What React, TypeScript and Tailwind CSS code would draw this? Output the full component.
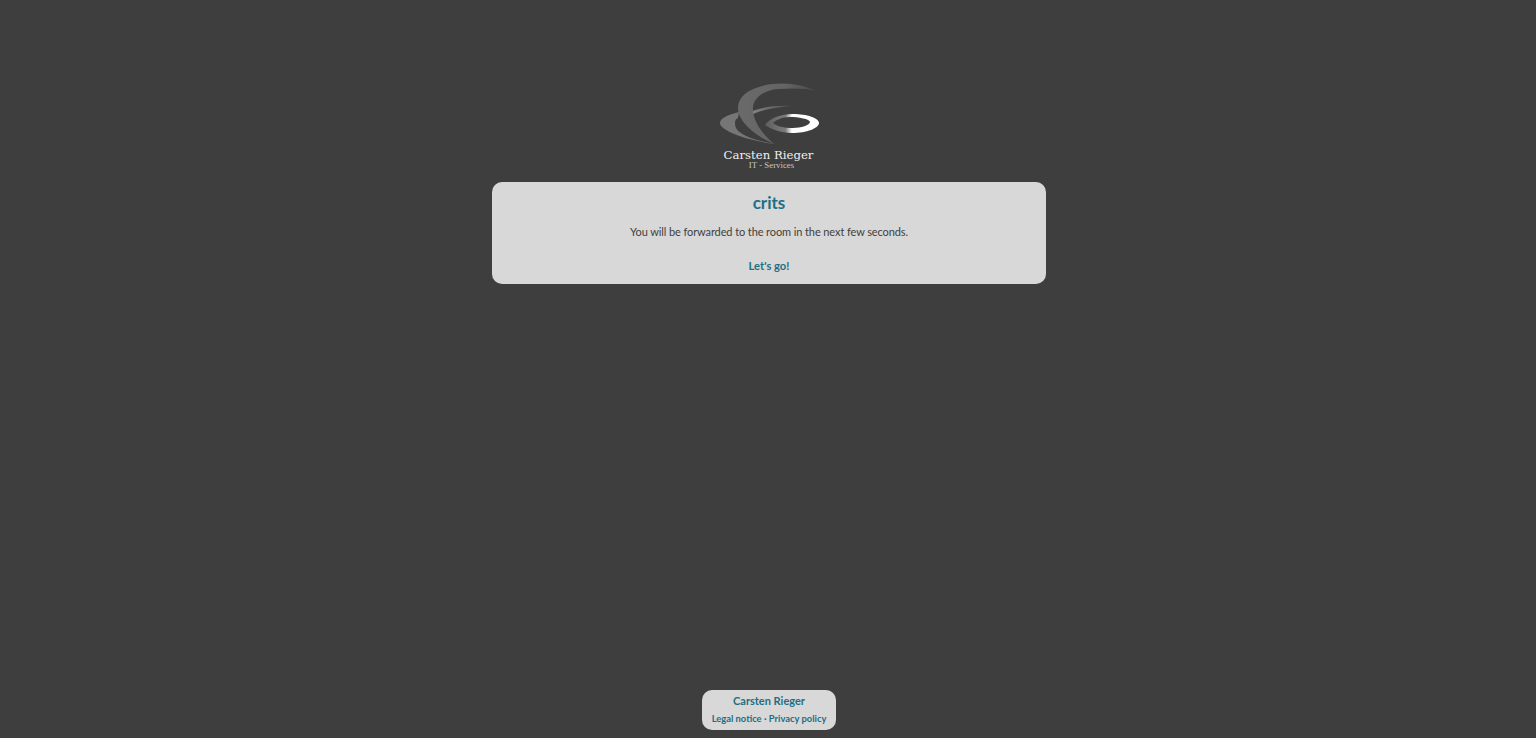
const sans = "font-['Lato',sans-serif]";

function Logo() {
  return (
    <svg width="140" height="110" viewBox="-1 0 140 110" className="block">
      <defs>
        <linearGradient id="top" x1="0" y1="0" x2="1" y2="0">
          <stop offset="0" stopColor="#6a6a6a" />
          <stop offset="0.6" stopColor="#646464" />
          <stop offset="1" stopColor="#484848" />
        </linearGradient>
        <linearGradient id="bar" x1="0" y1="0" x2="1" y2="0">
          <stop offset="0" stopColor="#828282" />
          <stop offset="1" stopColor="#4c4c4c" />
        </linearGradient>
        <linearGradient id="eye" x1="0" y1="0" x2="1" y2="0">
          <stop offset="0" stopColor="#5e5e5e" />
          <stop offset="0.38" stopColor="#7c7c7c" />
          <stop offset="0.5" stopColor="#ffffff" />
          <stop offset="1" stopColor="#ffffff" />
        </linearGradient>
      </defs>
      {/* upper swoosh */}
      <path d="M117 21C104 15 88 12 72 14C50 17 38 26 38 38C38 52 56 66 74 74C62 64 52 50 53 37C54 28 64 20 78 19C92 18 106 18 117 21Z" fill="url(#top)" />
      {/* thin bar */}
      <path d="M53 41C62 37 78 35 92 36C78 37 64 39 53 44Z" fill="url(#bar)" />
      {/* left swoosh */}
      <path d="M39 42C26 45 20 49 20 53C20 60 44 70 75 74C58 71 40 66 36 58C34 53 35 49 38 48Z" fill="#767676" />
      {/* eye */}
      <path fillRule="evenodd" d="M65 55C69 49 79 44 93 44C107 44 119 48 119 53C119 58 107 63 92 63C80 63 71 59 65 55ZM73 53C76 56 84 58 93 58C101 58 110 55 110 52C110 49 98 47 90 47C82 47 76 50 73 53Z" fill="url(#eye)" />
      <text x="68.5" y="88.5" textAnchor="middle" fontFamily="'DejaVu Serif',serif" fontSize="11.7" fill="#f0f0f0">Carsten Rieger</text>
      <text x="71.5" y="98" textAnchor="middle" fontFamily="'Liberation Serif',serif" fontSize="8.8" fill="#c8c8c8">IT - Services</text>
    </svg>
  );
}

export default function App() {
  return (
    <div className={`${sans} flex h-[738px] flex-col items-center overflow-hidden bg-[#3e3e3e] pl-[2px]`}>
      <div className="mt-[70px] mb-[2px]">
        <Logo />
      </div>
      <main className="flex h-[102px] w-[554px] flex-col items-center rounded-[10px] bg-[#d8d8d8] pt-[9px]">
        <h1 className="text-[17px] leading-[23px] font-bold text-[#1f6e85]">crits</h1>
        <p className="mt-[10px] text-[11px] leading-[16px] tracking-[-0.1px] text-[#404040]">
          You will be forwarded to the room in the next few seconds.
        </p>
        <a href="#" className="mt-[18px] text-[11.2px] leading-[16px] font-bold text-[#1f6e85]">
          Let's go!
        </a>
      </main>
      <footer className="mt-auto mb-[8px] flex h-[40px] w-[134px] flex-col items-center rounded-[10px] bg-[#d8d8d8] pt-[3px]">
        <div className="text-[11px] leading-[15px] font-bold text-[#1f6e85]">Carsten Rieger</div>
        <div className="mt-[4px] text-[9.4px] leading-[13px] font-bold whitespace-nowrap text-[#1f6e85]">
          <a href="#">Legal notice</a> · <a href="#">Privacy policy</a>
        </div>
      </footer>
    </div>
  );
}
